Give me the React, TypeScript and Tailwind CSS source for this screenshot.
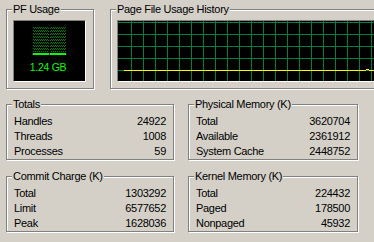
import React from 'react'

const font = "font-['Liberation_Sans',Arial,sans-serif]"

function GroupBox({
  title,
  className,
  children,
}: {
  title: string
  className?: string
  children?: React.ReactNode
}) {
  return (
    <div
      className={`relative border border-[#808080] shadow-[inset_1px_1px_0_#ffffff,1px_1px_0_#ffffff] ${className ?? ''}`}
    >
      <span className="absolute left-[5px] top-[-7px] bg-[#d4d0c8] px-[1px] text-[11px] leading-[13px] tracking-[-0.3px] text-black">
        {title}
      </span>
      {children}
    </div>
  )
}

function StatRows({ rows }: { rows: [string, string][] }) {
  return (
    <div className="flex flex-col pl-[7px] pr-[7px] pt-[9px] text-[11px] leading-[15px] tracking-[-0.3px] text-black">
      {rows.map(([label, value]) => (
        <div key={label} className="flex justify-between">
          <span>{label}</span>
          <span>{value}</span>
        </div>
      ))}
    </div>
  )
}

function Meter() {
  return (
    <svg width="33" height="28" viewBox="0 0 33 28" shapeRendering="crispEdges">
      <defs>
        <pattern id="dots" width="2" height="3" patternUnits="userSpaceOnUse">
          <rect x="0" y="0" width="1" height="1" fill="#008000" />
          <rect x="1" y="1" width="1" height="1" fill="#008000" />
        </pattern>
      </defs>
      <rect x="0" y="0" width="16" height="25" fill="url(#dots)" />
      <rect x="17" y="0" width="16" height="25" fill="url(#dots)" />
      <rect x="0" y="26" width="16" height="2" fill="#00ff00" />
      <rect x="17" y="26" width="16" height="2" fill="#00ff00" />
    </svg>
  )
}

function HistoryGraph() {
  const w = 270
  const h = 60
  const vlines: number[] = []
  for (let x = 13; x < w; x += 12) vlines.push(x)
  const hlines = [1, 13, 25, 37, 49]
  return (
    <svg width={w} height={h} viewBox={`0 0 ${w} ${h}`} shapeRendering="crispEdges">
      <rect width={w} height={h} fill="#000000" />
      {vlines.map((x) => (
        <rect key={'v' + x} x={x} y={0} width={1} height={h} fill="#008040" />
      ))}
      {hlines.map((y) => (
        <rect key={'h' + y} x={0} y={y} width={w} height={1} fill="#008040" />
      ))}
      <rect x={6} y={49} width={242} height={1} fill="#ffff00" />
      <rect x={248} y={48} width={3} height={1} fill="#ffff00" />
      <rect x={251} y={49} width={w - 251} height={1} fill="#ffff00" />
    </svg>
  )
}

export default function App() {
  return (
    <div className={`w-[374px] h-[242px] overflow-hidden bg-[#d4d0c8] pl-[6px] pt-[9px] ${font}`}>
      <div className="flex gap-[16px]">
        <GroupBox title="PF Usage" className="w-[88px] h-[80px] shrink-0">
          <div className="ml-[6px] mt-[10px] flex h-[62px] w-[73px] flex-col items-center border border-t-[#808080] border-l-[#808080] border-b-white border-r-white bg-black pt-[6px]">
            <Meter />
            <div className="mt-[6px] mr-[3px] text-[10.5px] leading-[13px] tracking-[-0.3px] text-[#00ff00]">
              1.24 GB
            </div>
          </div>
        </GroupBox>
        <GroupBox title="Page File Usage History" className="w-[290px] h-[80px] shrink-0">
          <div className="ml-[6px] mt-[10px] h-[62px] w-[272px] border border-t-[#808080] border-l-[#808080] border-b-white border-r-white">
            <HistoryGraph />
          </div>
        </GroupBox>
      </div>

      <div className="mt-[15px] flex gap-[14px]">
        <GroupBox title="Totals" className="w-[168px] h-[56px]">
          <StatRows
            rows={[
              ['Handles', '24922'],
              ['Threads', '1008'],
              ['Processes', '59'],
            ]}
          />
        </GroupBox>
        <GroupBox title="Physical Memory (K)" className="w-[170px] h-[56px]">
          <StatRows
            rows={[
              ['Total', '3620704'],
              ['Available', '2361912'],
              ['System Cache', '2448752'],
            ]}
          />
        </GroupBox>
      </div>

      <div className="mt-[16px] flex gap-[14px]">
        <GroupBox title="Commit Charge (K)" className="w-[168px] h-[56px]">
          <StatRows
            rows={[
              ['Total', '1303292'],
              ['Limit', '6577652'],
              ['Peak', '1628036'],
            ]}
          />
        </GroupBox>
        <GroupBox title="Kernel Memory (K)" className="w-[170px] h-[56px]">
          <StatRows
            rows={[
              ['Total', '224432'],
              ['Paged', '178500'],
              ['Nonpaged', '45932'],
            ]}
          />
        </GroupBox>
      </div>
    </div>
  )
}
